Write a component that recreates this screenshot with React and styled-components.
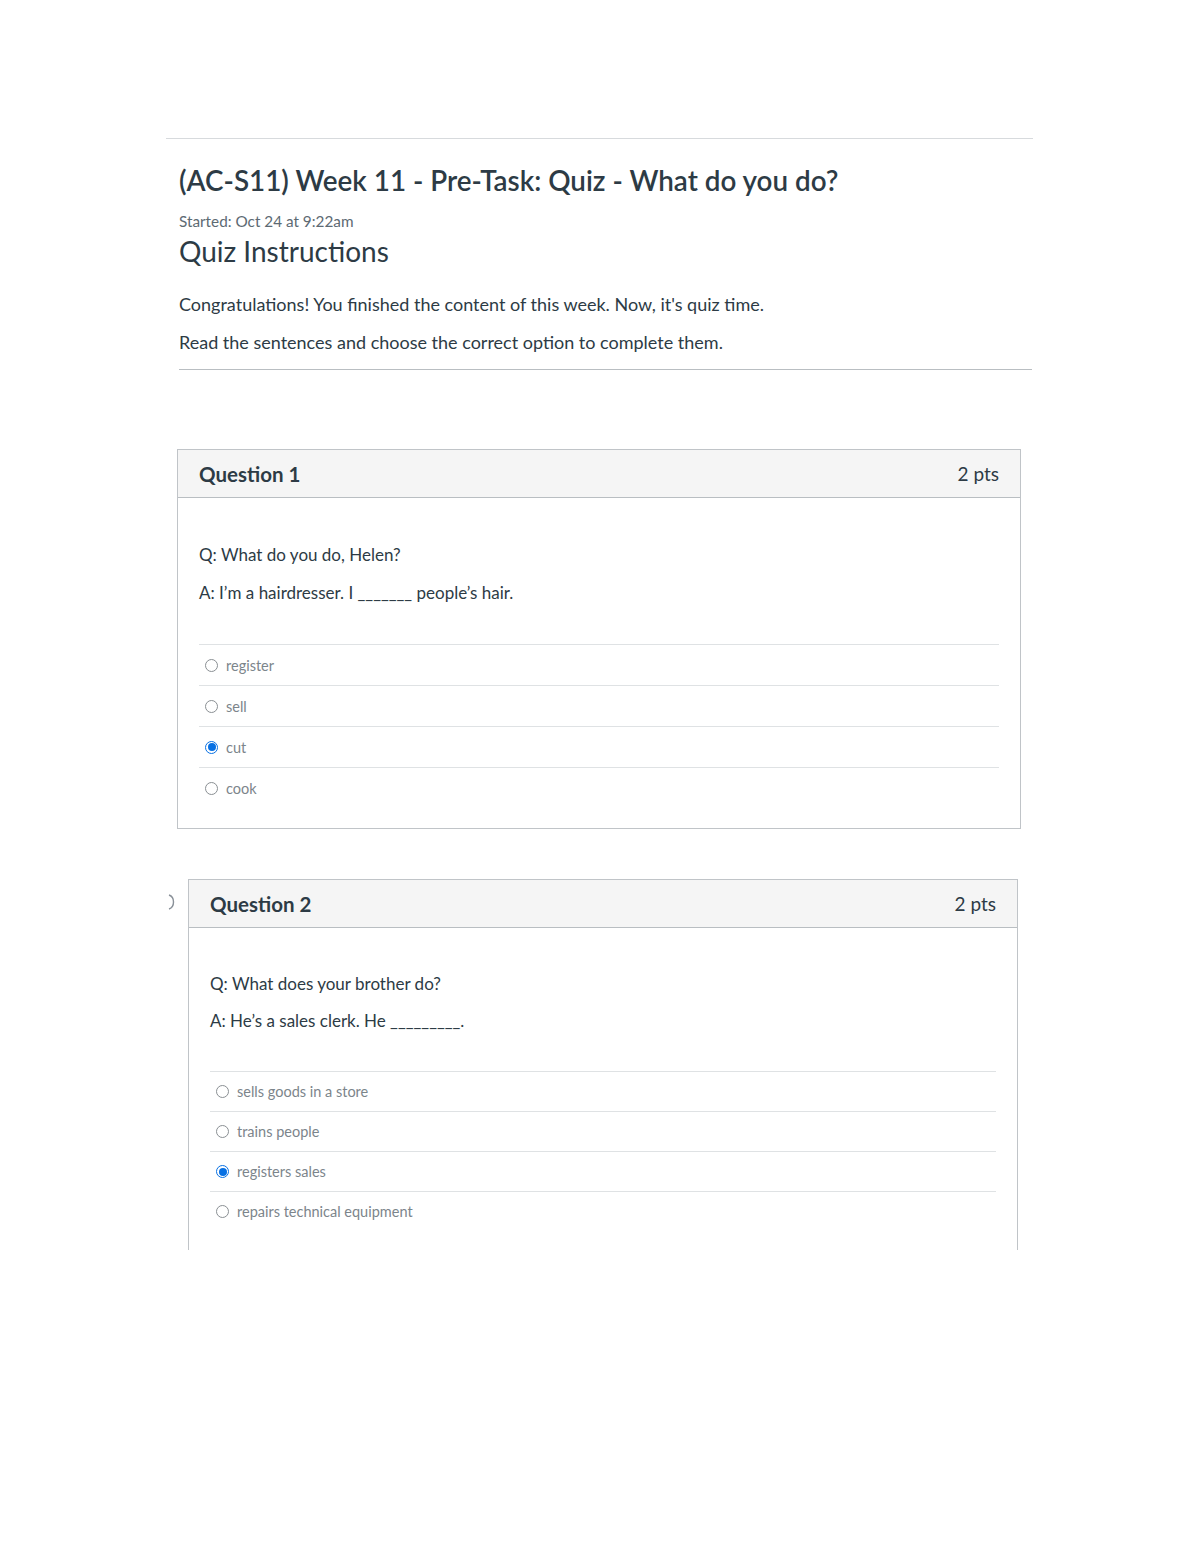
import React from 'react';
import styled, { createGlobalStyle } from 'styled-components';

const GlobalStyle = createGlobalStyle`
  body {
    margin: 0;
    background: #fff;
    font-family: Lato, "Noto Sans", "Liberation Sans", sans-serif;
    color: #2d3b45;
  }
`;

const Page = styled.div`
  width: 1200px;
  height: 1553px;
  overflow: hidden;
  padding-top: 138px;
  box-sizing: border-box;
`;

const TopRule = styled.div`
  margin: 0 167px 0 166px;
  border-top: 1px solid #d7dadd;
`;

const Header = styled.header`
  margin: 0 168px 0 179px;
  padding-top: 25px;
  border-bottom: 1px solid #b9bec2;
  padding-bottom: 16px;
`;

const Title = styled.h1`
  margin: 0;
  font-size: 27.8px;
  font-weight: 600;
  line-height: 34px;
  color: #2d3b45;
`;

const Started = styled.div`
  margin-top: 15px;
  font-size: 15.3px;
  color: #5d6a73;
  line-height: 16px;
`;

const SubTitle = styled.h2`
  margin: 5px 0 0;
  font-size: 28px;
  font-weight: 400;
  line-height: 34px;
  color: #2d3b45;
`;

const Para = styled.p`
  margin: ${p => (p.first ? '25px' : '16px')} 0 0;
  font-size: 18px;
  line-height: 22px;
  color: #2d3b45;
`;

const Questions = styled.div`
  display: flex;
  flex-direction: column;
  gap: 50px;
  margin-top: 79px;
`;

const QuestionRow = styled.div`
  position: relative;
  margin-left: ${p => p.left}px;
  width: ${p => p.width}px;
`;

const Marker = styled.svg`
  position: absolute;
  left: -22px;
  top: 14px;
`;

const Card = styled.section`
  border: 1px solid #c0c4c8;
  border-bottom: ${p => (p.cut ? 'none' : '1px solid #c0c4c8')};
  background: #fff;
  height: ${p => (p.cut ? '371px' : 'auto')};
  box-sizing: border-box;
`;

const CardHead = styled.div`
  display: flex;
  justify-content: space-between;
  align-items: center;
  height: 47px;
  padding: 0 21px;
  background: #f5f5f5;
  border-bottom: 1px solid #b9bec2;
`;

const QName = styled.span`
  font-size: 20.5px;
  font-weight: 700;
  color: #2d3b45;
`;

const Points = styled.span`
  font-size: 19px;
  color: #2d3b45;
`;

const CardBody = styled.div`
  padding: ${p => (p.tight ? '45px' : '46px')} 21px ${p => (p.tight ? 0 : '20px')};
`;

const Line = styled.p`
  margin: 0 0 ${p => (p.tight ? '15px' : '16px')};
  font-size: 17px;
  line-height: 22px;
  color: #2d3b45;
`;

const Answers = styled.ul`
  list-style: none;
  margin: ${p => (p.tight ? '39px' : '40px')} 0 0;
  padding: 0;
  border-top: 1px solid #dfe2e4;
`;

const Answer = styled.li`
  display: flex;
  align-items: center;
  gap: 8px;
  height: ${p => (p.tight ? '39px' : '40px')};
  padding-left: 6px;
  border-bottom: ${p => (p.last ? 'none' : '1px solid #dfe2e4')};
  font-size: 14.5px;
  color: #7c858b;
`;

const Radio = styled.span`
  width: 13px;
  height: 13px;
  border-radius: 50%;
  box-sizing: border-box;
  border: 1px solid ${p => (p.checked ? '#0770e3' : '#8a8f93')};
  background: #fff;
  display: flex;
  align-items: center;
  justify-content: center;
  &::after {
    content: '';
    display: ${p => (p.checked ? 'block' : 'none')};
    width: 8px;
    height: 8px;
    border-radius: 50%;
    background: #0770e3;
  }
`;

const questions = [
  {
    name: 'Question 1',
    left: 177,
    width: 844,
    q: 'Q: What do you do, Helen?',
    a: 'A: I\u2019m a hairdresser. I _______ people\u2019s hair.',
    options: ['register', 'sell', 'cut', 'cook'],
    checked: 2,
  },
  {
    name: 'Question 2',
    left: 188,
    width: 830,
    marker: true,
    cut: true,
    q: 'Q: What does your brother do?',
    a: 'A: He\u2019s a sales clerk. He _________.',
    options: ['sells goods in a store', 'trains people', 'registers sales', 'repairs technical equipment'],
    checked: 2,
  },
];

const App = () => (
  <Page>
    <GlobalStyle />
    <TopRule />
    <Header>
      <Title>(AC-S11) Week 11 - Pre-Task: Quiz - What do you do?</Title>
      <Started>Started: Oct 24 at 9:22am</Started>
      <SubTitle>Quiz Instructions</SubTitle>
      <Para first>Congratulations! You finished the content of this week. Now, it's quiz time.</Para>
      <Para>Read the sentences and choose the correct option to complete them.</Para>
    </Header>
    <Questions>
      {questions.map(item => (
        <QuestionRow key={item.name} left={item.left} width={item.width}>
          {item.marker && (
            <Marker width="12" height="18" viewBox="0 0 12 18">
              <path d="M3 2 C 9 4, 9 14, 3 16" fill="none" stroke="#8a9199" strokeWidth="1.4" />
            </Marker>
          )}
          <Card cut={item.cut}>
            <CardHead>
              <QName>{item.name}</QName>
              <Points>2 pts</Points>
            </CardHead>
            <CardBody cut={item.cut} tight={item.cut}>
              <Line tight={item.cut}>{item.q}</Line>
              <Line tight={item.cut}>{item.a}</Line>
              <Answers tight={item.cut}>
                {item.options.map((opt, i) => (
                  <Answer key={opt} tight={item.cut} last={i === item.options.length - 1}>
                    <Radio checked={i === item.checked} />
                    {opt}
                  </Answer>
                ))}
              </Answers>
            </CardBody>
          </Card>
        </QuestionRow>
      ))}
    </Questions>
  </Page>
);

export default App;
